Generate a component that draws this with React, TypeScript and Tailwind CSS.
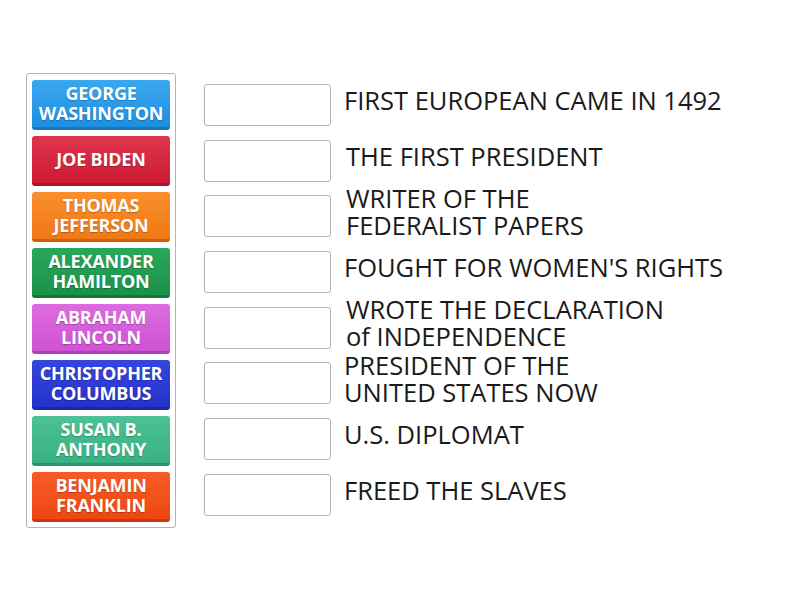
const tiles = [
  { label: ["GEORGE", "WASHINGTON"], cls: "bg-gradient-to-b from-[#3aa8f0] to-[#1e8ee0] border-b-[#1676c0]" },
  { label: ["JOE BIDEN"], cls: "bg-gradient-to-b from-[#e0344d] to-[#cc1a34] border-b-[#a8142a]" },
  { label: ["THOMAS", "JEFFERSON"], cls: "bg-gradient-to-b from-[#f9902c] to-[#f07814] border-b-[#cc6210]" },
  { label: ["ALEXANDER", "HAMILTON"], cls: "bg-gradient-to-b from-[#28a85a] to-[#1c9148] border-b-[#16763a]" },
  { label: ["ABRAHAM", "LINCOLN"], cls: "bg-gradient-to-b from-[#dc6ce0] to-[#cf52d4] border-b-[#b040b4]" },
  { label: ["CHRISTOPHER", "COLUMBUS"], cls: "bg-gradient-to-b from-[#3646dc] to-[#2432cc] border-b-[#1c28a8]" },
  { label: ["SUSAN B.", "ANTHONY"], cls: "bg-gradient-to-b from-[#4cc296] to-[#38b182] border-b-[#2c946c]" },
  { label: ["BENJAMIN", "FRANKLIN"], cls: "bg-gradient-to-b from-[#f65c26] to-[#ee4612] border-b-[#c8380c]" },
];

const clues = [
  { lines: ["FIRST EUROPEAN CAME IN 1492"], indent: false },
  { lines: ["THE FIRST PRESIDENT"], indent: true },
  { lines: ["WRITER OF THE", "FEDERALIST PAPERS"], indent: true },
  { lines: ["FOUGHT FOR WOMEN'S RIGHTS"], indent: false },
  { lines: ["WROTE THE DECLARATION", "of INDEPENDENCE"], indent: true },
  { lines: ["PRESIDENT OF THE", "UNITED STATES NOW"], indent: false },
  { lines: ["U.S. DIPLOMAT"], indent: false },
  { lines: ["FREED THE SLAVES"], indent: false },
];

export default function App() {
  return (
    <div
      className="w-[800px] h-[600px] bg-white flex items-start pt-[73px] pl-[26px]"
      style={{ fontFamily: '"Open Sans", sans-serif' }}
    >
      <div className="w-[150px] border border-[#b4b4b4] rounded-[3px] pt-[6px] pb-[5px] px-[5px] flex flex-col gap-[6px]">
        {tiles.map((t, i) => (
          <div
            key={i}
            className={`h-[50px] rounded-[3px] border-b-[3px] flex flex-col items-center justify-center text-white font-bold text-[18px] leading-[19.5px] tracking-[-0.2px] [text-shadow:0_1px_1px_rgba(0,0,0,0.25)] ${t.cls}`}
          >
            {t.label.map((l, j) => (
              <span key={j}>{l}</span>
            ))}
          </div>
        ))}
      </div>
      <div className="ml-[28px] pt-[4px] flex flex-col">
        {clues.map((c, i) => (
          <div key={i} className="h-[55.7px] flex items-center">
            <div className="w-[127px] h-[42px] border border-[#b4b4b4] rounded-[3px] bg-white shrink-0" />
            <div
              className={`text-[#1a1a1a] text-[25.5px] leading-[27px] pb-[9px] ${c.indent ? "ml-[15px]" : "ml-[13px]"}`}
            >
              {c.lines.map((l, j) => (
                <div key={j}>{l}</div>
              ))}
            </div>
          </div>
        ))}
      </div>
    </div>
  );
}
